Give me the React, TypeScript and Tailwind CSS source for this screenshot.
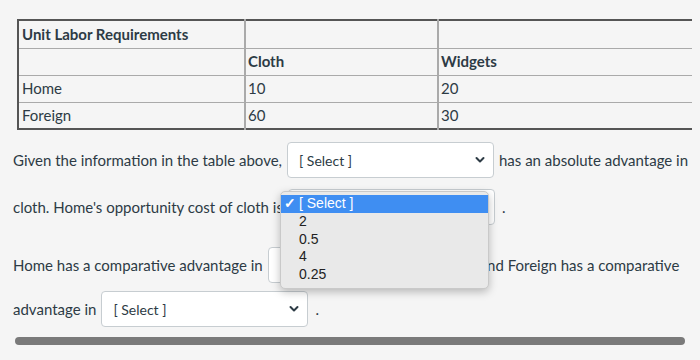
import React from "react";

const lato = { fontFamily: "Lato, 'Open Sans', sans-serif" } as const;

function Chevron() {
  return (
    <svg className="h-[8px] w-[10px]" viewBox="0 0 10 8" fill="none">
      <path d="M1.5 2L5 5.5L8.5 2" stroke="#2d3b45" strokeWidth={2} strokeLinecap="round" strokeLinejoin="round" />
    </svg>
  );
}

function Select({ className = "" }: { className?: string }) {
  return (
    <div
      className={`mx-[5px] flex h-[36px] w-[207px] shrink-0 items-center justify-between rounded-[4px] border border-[#c7cdd1] bg-white pl-[11px] pr-[8px] text-[14px] text-[#2d3b45] ${className}`}
    >
      <span>[ Select ]</span>
      <Chevron />
    </div>
  );
}

const options = ["2", "0.5", "4", "0.25"];

export default function App() {
  return (
    <div className="relative h-[360px] w-[700px] overflow-hidden bg-[#f5f5f5] text-[#2d3b45]" style={lato}>
      {/* Table */}
      <div className="pl-[17px] pr-[8px] pt-[19px]">
        <table className="w-[675px] border-collapse text-[15px]">
          <tbody>
            <tr className="h-[28px] border-t-2 border-[#555]">
              <td className="w-[227px] border-l-2 border-b border-[#555] border-b-[#aaa] pl-[3px] font-bold">Unit Labor Requirements</td>
              <td className="w-[193px] border-l-2 border-b border-[#aaa]"></td>
              <td className="border-l-2 border-b border-[#aaa]"></td>
            </tr>
            <tr className="h-[27px]">
              <td className="border-l-2 border-b border-[#555] border-b-[#aaa]"></td>
              <td className="border-l-2 border-b border-[#aaa] pl-[2px] font-bold">Cloth</td>
              <td className="border-l-2 border-b border-[#aaa] pl-[2px] font-bold">Widgets</td>
            </tr>
            <tr className="h-[27px]">
              <td className="border-l-2 border-b border-[#555] border-b-[#aaa] pl-[3px]">Home</td>
              <td className="border-l-2 border-b border-[#aaa] pl-[2px]">10</td>
              <td className="border-l-2 border-b border-[#aaa] pl-[2px]">20</td>
            </tr>
            <tr className="h-[27px] border-b-2 border-[#555]">
              <td className="border-l-2 border-[#555] pl-[3px]">Foreign</td>
              <td className="border-l-2 border-[#aaa] pl-[2px]">60</td>
              <td className="border-l-2 border-[#aaa] pl-[2px]">30</td>
            </tr>
          </tbody>
        </table>
      </div>

      {/* Question text */}
      <div className="whitespace-nowrap pl-[13px] pt-[12px] text-[15px]">
        <div className="flex items-center">
          <span className="shrink-0">Given the information in the table above,</span>
          <Select />
          <span className="shrink-0">has an absolute advantage in</span>
        </div>
        <div className="mt-[11px] flex items-center">
          <span className="shrink-0">cloth. Home's opportunity cost of cloth is</span>
          <Select />
          <span className="shrink-0 ml-[2px]">.</span>
        </div>
        <div className="mt-[22px] flex items-center">
          <span className="shrink-0">Home has a comparative advantage in</span>
          <Select />
          <span className="shrink-0">and Foreign has a comparative</span>
        </div>
        <div className="mt-[8px] flex items-center">
          <span className="shrink-0">advantage in</span>
          <Select />
          <span className="shrink-0 ml-[2px]">.</span>
        </div>
      </div>

      {/* Scrollbar */}
      <div className="mx-[15px] mt-[10px] h-[8px] rounded-full bg-[#7a7a7a]" />

      {/* Open dropdown menu */}
      <div
        className="absolute left-[280px] top-[191px] w-[209px] rounded-[5px] border border-[#c9c9c9] bg-[#e9e9e9] pb-[4px] pt-[3px] text-[14px] leading-[17.7px] text-[#222] shadow-[0_3px_8px_rgba(0,0,0,0.25)]"
        style={{ fontFamily: "'Liberation Sans', Arial, sans-serif" }}
      >
        <div className="flex h-[18px] items-center bg-[#3f8ef2] text-white">
          <span className="w-[18px] pl-[3px] text-[14px] font-bold">✓</span>
          <span>[ Select ]</span>
        </div>
        {options.map((o) => (
          <div key={o} className="pl-[18px]">{o}</div>
        ))}
      </div>
    </div>
  );
}
